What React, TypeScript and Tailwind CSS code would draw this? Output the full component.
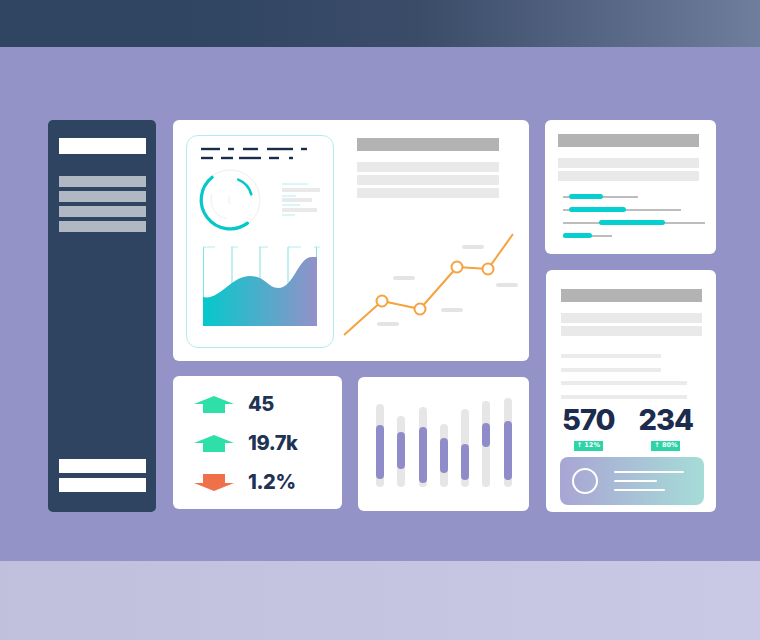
const navLines = [0, 1, 2, 3];

const verticalBars = [
  { track: 83, top: 21, fill: 54 },
  { track: 71, top: 16, fill: 37 },
  { track: 80, top: 20, fill: 56 },
  { track: 63, top: 14, fill: 35 },
  { track: 78, top: 35, fill: 36 },
  { track: 86, top: 22, fill: 24 },
  { track: 89, top: 23, fill: 59 },
];

const progress = [
  { track: 75, start: 6, fill: 34 },
  { track: 118, start: 6, fill: 57 },
  { track: 142, start: 36, fill: 66 },
  { track: 49, start: 0, fill: 29 },
];

const stats = [
  { value: '45', up: true },
  { value: '19.7k', up: true },
  { value: '1.2%', up: false },
];

function Sidebar() {
  return (
    <div className="flex h-[392px] w-[108px] shrink-0 flex-col rounded-[5px] bg-[#2f4461] px-[11px] pb-[20px] pt-[18px]">
      <div className="h-[16px] w-[87px] bg-white" />
      <div className="mt-[22px] flex flex-col gap-[4px]">
        {navLines.map((i) => (
          <div key={i} className="h-[11px] w-[87px] bg-[#b0b8c3]" />
        ))}
      </div>
      <div className="mt-auto flex flex-col gap-[5px]">
        <div className="h-[14px] w-[87px] bg-white" />
        <div className="h-[14px] w-[87px] bg-white" />
      </div>
    </div>
  );
}

function TabletPanel() {
  return (
    <div className="h-[213px] w-[148px] shrink-0 rounded-[12px] border border-[#b3ecee]">
      <svg width="146" height="211" viewBox="1 1 146 211" className="block">
        <defs>
          <linearGradient id="area" x1="0" y1="0" x2="1" y2="0">
            <stop offset="0" stopColor="#04c9cc" />
            <stop offset="1" stopColor="#9391c9" />
          </linearGradient>
        </defs>
        {/* heading dashes */}
        <g stroke="#1a2c4c" strokeWidth="2.4">
          <line x1="15" y1="14" x2="34" y2="14" />
          <line x1="42" y1="14" x2="48" y2="14" />
          <line x1="57" y1="14" x2="72" y2="14" />
          <line x1="81" y1="14" x2="107" y2="14" />
          <line x1="115" y1="14" x2="121" y2="14" />
          <line x1="15" y1="23" x2="27" y2="23" />
          <line x1="35" y1="23" x2="47" y2="23" />
          <line x1="53" y1="23" x2="75" y2="23" />
          <line x1="83" y1="23" x2="93" y2="23" />
          <line x1="103" y1="23" x2="107" y2="23" />
        </g>
        {/* donut */}
        <circle cx="44" cy="65" r="30" fill="none" stroke="#eeeeee" strokeWidth="1" />
        <path d="M40.7,83.7 A19,19 0 0 1 26.15,58.5" fill="none" stroke="#eeeeee" strokeWidth="1" />
        <path d="M42,61 q3,1 1,4 q-2,3 2,4" fill="none" stroke="#eeeeee" strokeWidth="1" />
        <path d="M61.45,88.16 A29,29 0 0 1 26.15,42.15" fill="none" stroke="#06c8cb" strokeWidth="3.2" strokeLinecap="round" />
        <path d="M52.24,44.6 A22,22 0 0 1 65.25,59.31" fill="none" stroke="#06c8cb" strokeWidth="2.6" strokeLinecap="round" />
        {/* legend lines */}
        <g stroke="#aeeef0" strokeWidth="1">
          <line x1="96" y1="49" x2="122" y2="49" />
          <line x1="96" y1="61" x2="110" y2="61" />
          <line x1="96" y1="70" x2="114" y2="70" />
          <line x1="96" y1="80" x2="109" y2="80" />
        </g>
        <g fill="#e9e9e9">
          <rect x="96" y="53" width="38" height="4" />
          <rect x="96" y="63" width="30" height="4" />
          <rect x="96" y="73" width="35" height="4" />
        </g>
        {/* area chart */}
        <g stroke="#aeeef0" strokeWidth="1">
          <line x1="17" y1="112" x2="29" y2="112" />
          <line x1="45" y1="112" x2="52" y2="112" />
          <line x1="73" y1="112" x2="82" y2="112" />
          <line x1="102" y1="112" x2="115" y2="112" />
          <line x1="128" y1="112" x2="134" y2="112" />
        </g>
        <g stroke="#7fe3e6" strokeWidth="1">
          <line x1="17.5" y1="112" x2="17.5" y2="170" />
          <line x1="46" y1="112" x2="46" y2="160" />
          <line x1="74" y1="112" x2="74" y2="160" />
          <line x1="102" y1="112" x2="102" y2="160" />
          <line x1="130.5" y1="112" x2="130.5" y2="130" />
        </g>
        <path
          d="M17,162 C33,166 45,141 64,141 C79,141 82,153 92,153 C108,153 112,122 126,122 L131,122 L131,191 L17,191 Z"
          fill="url(#area)"
        />
      </svg>
    </div>
  );
}

function LineChart() {
  const pts = [
    [42, 72],
    [80, 80],
    [117, 38],
    [148, 40],
  ];
  return (
    <svg width="185" height="110" className="mt-[31px] block">
      <g fill="#e4e4e4">
        <rect x="122" y="16" width="22" height="4" rx="2" />
        <rect x="53" y="47" width="22" height="4" rx="2" />
        <rect x="156" y="54" width="22" height="4" rx="2" />
        <rect x="101" y="79" width="22" height="4" rx="2" />
        <rect x="37" y="93" width="22" height="4" rx="2" />
      </g>
      <polyline
        points="4,106 42,72 80,80 117,38 148,40 173,5"
        fill="none"
        stroke="#f6a23e"
        strokeWidth="2"
        strokeLinejoin="round"
      />
      {pts.map(([x, y]) => (
        <circle key={x} cx={x} cy={y} r="5.5" fill="white" stroke="#f6a23e" strokeWidth="2" />
      ))}
    </svg>
  );
}

function MainCard() {
  return (
    <div className="flex h-[241px] w-[356px] items-start rounded-[6px] bg-white pl-[13px] pt-[15px]">
      <TabletPanel />
      <div className="ml-[6px] flex flex-col pt-[3px]">
        <div className="ml-[17px] h-[13px] w-[142px] bg-[#b3b3b3]" />
        <div className="ml-[17px] mt-[11px] flex flex-col gap-[3px]">
          <div className="h-[10px] w-[142px] bg-[#e9e9e9]" />
          <div className="h-[10px] w-[142px] bg-[#e9e9e9]" />
          <div className="h-[10px] w-[142px] bg-[#e9e9e9]" />
        </div>
        <LineChart />
      </div>
    </div>
  );
}

function Arrow({ up }: { up: boolean }) {
  return (
    <svg width="40" height="17" viewBox="0 0 40 17" className="block shrink-0">
      {up ? (
        <polygon points="20,0 40,8 31,8 31,17 9,17 9,8 0,8" fill="#2fdfa8" />
      ) : (
        <polygon points="9,0 31,0 31,9 40,9 20,17 0,9 9,9" fill="#ee7149" />
      )}
    </svg>
  );
}

function StatsCard() {
  return (
    <div className="flex h-[133px] w-[169px] flex-col gap-[17px] rounded-[6px] bg-white pl-[21px] pt-[17px]">
      {stats.map((s) => (
        <div key={s.value} className="flex h-[22px] items-center gap-[14px]">
          <Arrow up={s.up} />
          <span className="text-[20px] font-extrabold leading-none tracking-[-0.4px] text-[#1f3354]">{s.value}</span>
        </div>
      ))}
    </div>
  );
}

function BarsCard() {
  return (
    <div className="mt-[1px] flex h-[134px] w-[171px] items-end gap-[13.3px] rounded-[6px] bg-white pb-[24px] pl-[18px]">
      {verticalBars.map((b, i) => (
        <div key={i} className="relative w-[8px] rounded-full bg-[#e6e6e6]" style={{ height: b.track }}>
          <div
            className="absolute left-0 w-[8px] rounded-full bg-[#8f8cc9]"
            style={{ top: b.top, height: b.fill }}
          />
        </div>
      ))}
    </div>
  );
}

function ProgressCard() {
  return (
    <div className="flex h-[134px] w-[171px] flex-col rounded-[6px] bg-white pl-[13px] pt-[14px]">
      <div className="h-[13px] w-[141px] bg-[#b3b3b3]" />
      <div className="mt-[11px] flex flex-col gap-[3px]">
        <div className="h-[10px] w-[141px] bg-[#e9e9e9]" />
        <div className="h-[10px] w-[141px] bg-[#e9e9e9]" />
      </div>
      <div className="ml-[5px] mt-[13px] flex flex-col gap-[8px]">
        {progress.map((p, i) => (
          <div key={i} className="relative h-[5px]" style={{ width: p.track }}>
            <div className="absolute left-0 right-0 top-[2px] h-[1.5px] bg-[#bdbdbd]" />
            <div
              className="absolute top-0 h-[5px] rounded-full bg-[#05cfd1]"
              style={{ left: p.start, width: p.fill }}
            />
          </div>
        ))}
      </div>
    </div>
  );
}

function Badge({ label }: { label: string }) {
  return (
    <div className="flex h-[10px] items-center bg-[#2dd4a8] px-[3px] font-['DejaVu_Sans',sans-serif] text-[6.5px] font-bold leading-none text-white">
      {label}
    </div>
  );
}

function SummaryCard() {
  return (
    <div className="ml-[1px] flex h-[242px] w-[170px] flex-col rounded-[6px] bg-white pl-[15px] pt-[19px]">
      <div className="h-[13px] w-[141px] bg-[#b3b3b3]" />
      <div className="mt-[11px] flex flex-col gap-[3px]">
        <div className="h-[10px] w-[141px] bg-[#e9e9e9]" />
        <div className="h-[10px] w-[141px] bg-[#e9e9e9]" />
      </div>
      <div className="mt-[18px] flex flex-col gap-[9.5px]">
        <div className="h-[4px] w-[100px] bg-[#ebebeb]" />
        <div className="h-[4px] w-[100px] bg-[#ebebeb]" />
        <div className="h-[4px] w-[126px] bg-[#ebebeb]" />
        <div className="h-[4px] w-[126px] bg-[#ebebeb]" />
      </div>
      <div className="mt-[6px] flex gap-[24px] pl-[1px]">
        <div className="flex flex-col items-center gap-[6px]">
          <span className="text-[29px] font-extrabold leading-[30px] tracking-[-1px] text-[#1b2c4e]">570</span>
          <Badge label="↑ 12%" />
        </div>
        <div className="flex flex-col items-center gap-[6px]">
          <span className="text-[29px] font-extrabold leading-[30px] tracking-[-1px] text-[#1b2c4e]">234</span>
          <Badge label="↑ 80%" />
        </div>
      </div>
      <div className="ml-[-1px] mt-[6px] flex h-[48px] w-[144px] items-center rounded-[8px] bg-linear-to-r from-[#a8a5d4] to-[#a5dcd7] pl-[12px]">
        <div className="h-[26px] w-[26px] rounded-full border-2 border-white" />
        <div className="ml-[16px] flex flex-col gap-[7px]">
          <div className="h-[2px] w-[70px] rounded-full bg-white" />
          <div className="h-[2px] w-[43px] rounded-full bg-white" />
          <div className="h-[2px] w-[51px] rounded-full bg-white" />
        </div>
      </div>
    </div>
  );
}

export default function App() {
  return (
    <div className="flex h-[640px] w-[760px] flex-col overflow-hidden font-['Inter',sans-serif]">
      <div className="h-[47px] shrink-0 bg-linear-to-r from-[#2f4562] from-25% via-[#3b4c69] via-55% to-[#6e7e9c]" />
      <div className="flex h-[514px] shrink-0 items-start bg-[#9493c8] pl-[48px] pt-[73px]">
        <Sidebar />
        <div className="ml-[17px] flex flex-col gap-[15px]">
          <MainCard />
          <div className="flex items-start gap-[16px]">
            <StatsCard />
            <BarsCard />
          </div>
        </div>
        <div className="ml-[16px] flex flex-col gap-[16px]">
          <ProgressCard />
          <SummaryCard />
        </div>
      </div>
      <div className="flex-1 bg-linear-to-r from-[#c0c0dc] to-[#c9c9e5]" />
    </div>
  );
}
